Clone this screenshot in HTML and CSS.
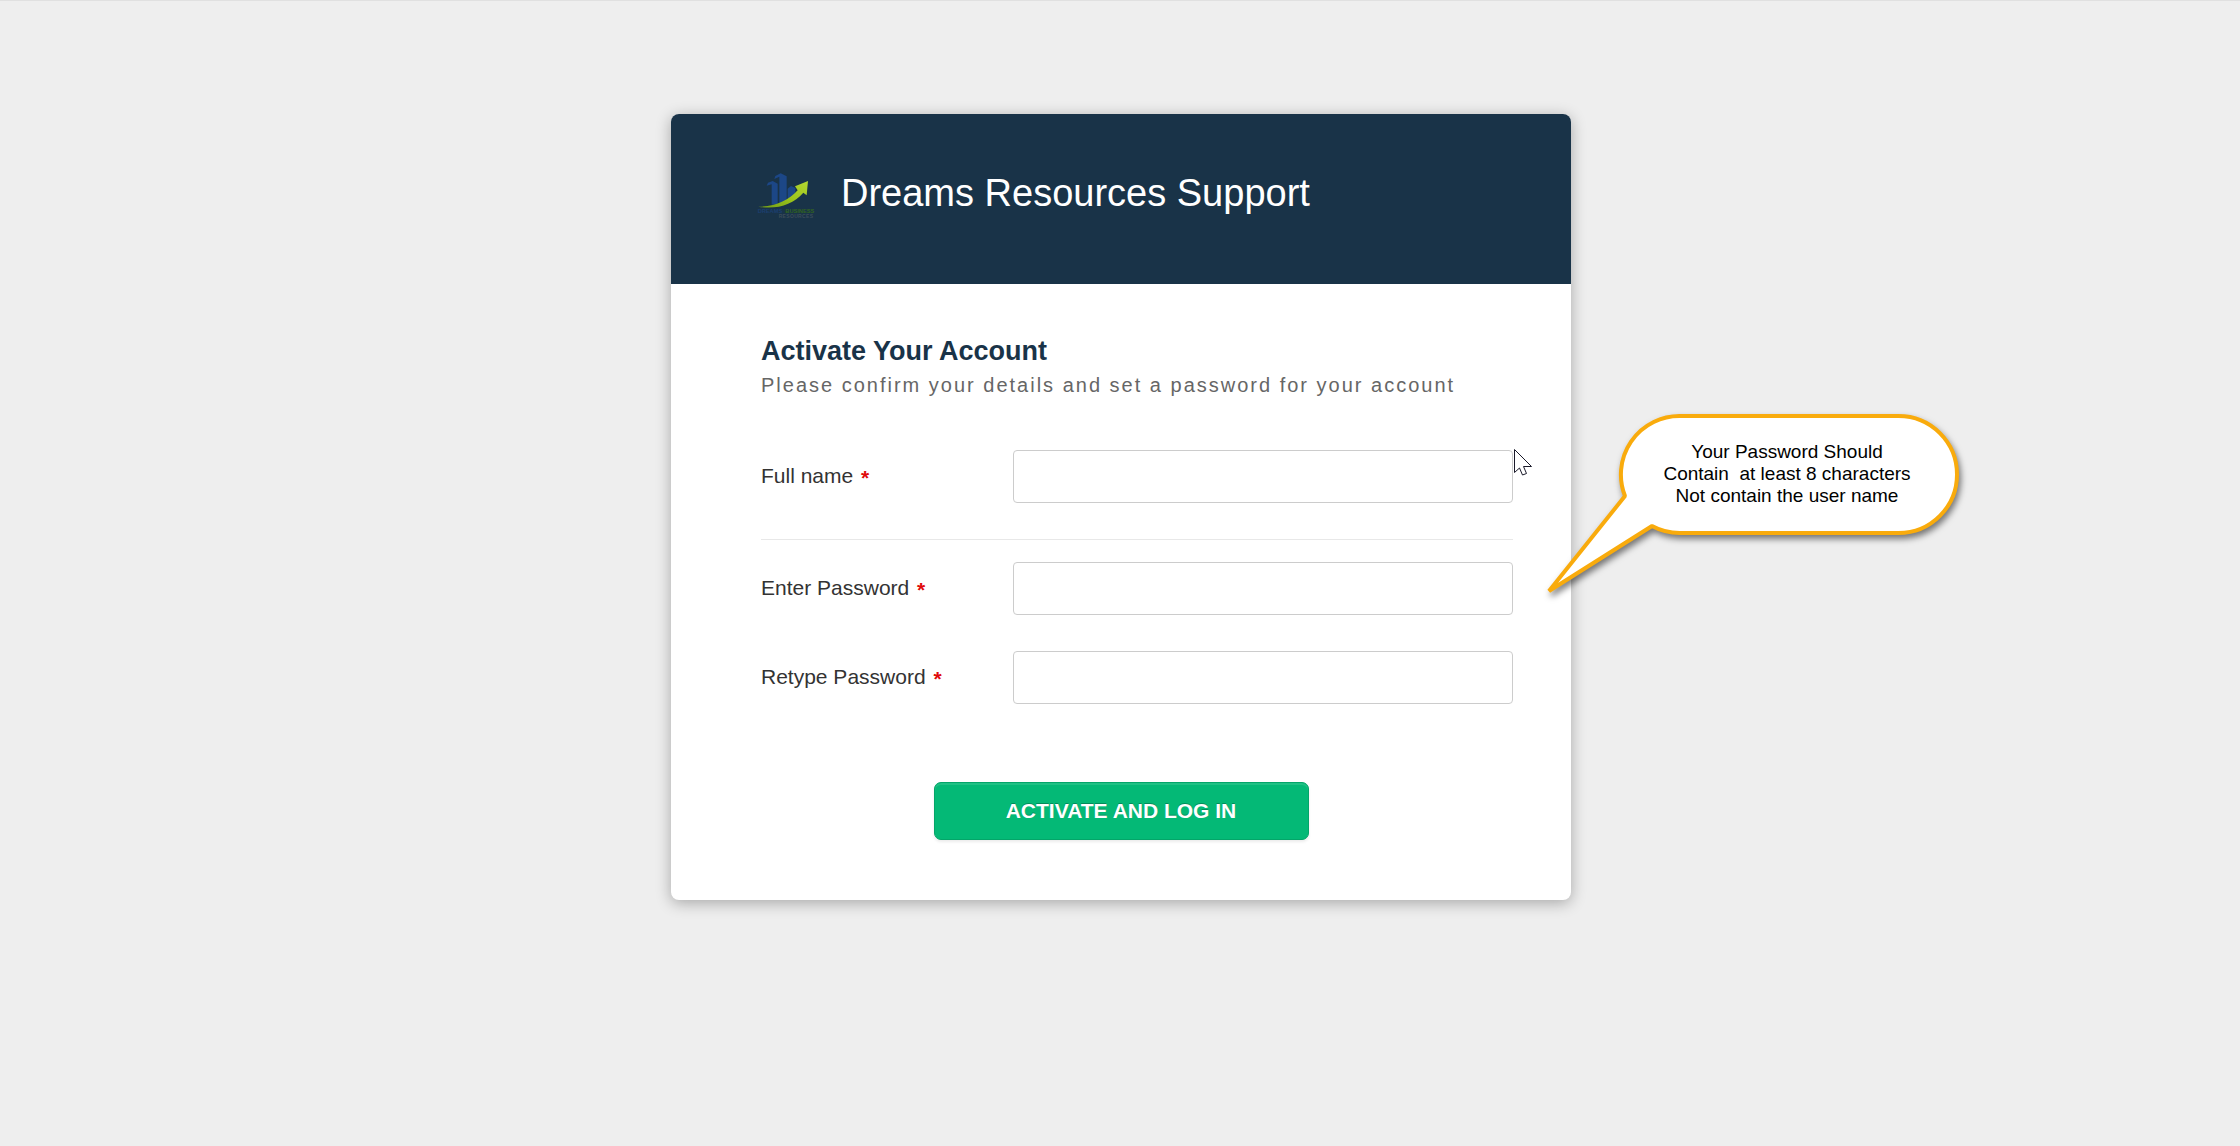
FILE: index.html
```
<!doctype html>
<html lang="en">
<head>
  <meta charset="UTF-8">
  <title>Dreams Resources Support</title>
  <link rel="stylesheet" href="styles.css">
</head>
<body>
  <div class="box">
    <div class="box-header">
      <svg class="logo" viewBox="51 60 180 150" role="img" aria-label="Dreams Business Resources">
        <defs>
          <linearGradient id="arrow" x1="0" y1="1" x2="1" y2="0">
            <stop offset="0" stop-color="#6f9c16"/>
            <stop offset="0.5" stop-color="#9cc41c"/>
            <stop offset="1" stop-color="#b4d832"/>
          </linearGradient>
        </defs>
        <g fill="#1c4787">
          <path d="M80 107 L84 98 L98 93 L113 101 V162 L95 164 V103 Z"/>
          <path d="M103 87 L106 78 L122 70 L140 79 V152 L118 161 V80 Z"/>
          <path d="M143 116 L153 108 L166 114 V130 L143 148 Z"/>
        </g>
        <path fill="url(#arrow)" d="M55 170 C105 170 147 151 173 121 L165 109 L204 93 L200 136 L190 128 C158 164 112 179 55 170 Z"/>
        <text class="logo-dreams" x="53" y="189">DREAMS</text>
        <text class="logo-business" x="136" y="189">BUSINESS</text>
        <text class="logo-resources" x="116" y="205">RESOURCES</text>
      </svg>
      <h1>Dreams Resources Support</h1>
    </div>
    <form>
      <div class="fields">
        <h2>Activate Your Account</h2>
        <p class="info">Please confirm your details and set a password for your account</p>
        <div class="row">
          <label for="name">Full name <span class="required">*</span></label>
          <input type="text" id="name" name="name">
        </div>
        <hr>
        <div class="row">
          <label for="password">Enter Password <span class="required">*</span></label>
          <input type="password" id="password" name="password">
        </div>
        <div class="row">
          <label for="retype">Retype Password <span class="required">*</span></label>
          <input type="password" id="retype" name="retype">
        </div>
      </div>
      <div class="actions">
        <button type="submit">ACTIVATE AND LOG IN</button>
      </div>
    </form>

    <div class="callout">
      <svg viewBox="0 0 440 210" aria-hidden="true">
        <path d="M85 90 A58.5 58.5 0 0 1 139.5 10 H358.5 A58.5 58.5 0 0 1 358.5 127 H139.5 A58.5 58.5 0 0 1 112 120 L9 185 Z"/>
      </svg>
      <p>Your Password Should<br>Contain&nbsp; at least 8 characters<br>Not contain the user name</p>
    </div>

    <svg class="cursor" viewBox="0 0 20 30" aria-hidden="true">
      <path d="M1.5 1.5 V24.5 L6.5 20 L9.5 27 L13.5 25.5 L10.5 18.5 H18.5 Z"/>
    </svg>
  </div>
</body>
</html>
```
FILE: styles.css
```
body, h1, h2, p {
  margin: 0;
  padding: 0;
}

body {
  padding-left: 2px;
  border-top: 1px solid #e0e0e0;
  background: #eee;
  font-family: Arial, "Liberation Sans", sans-serif;
  font-size: 21px;
  color: #333;
}

.box {
  position: relative;
  max-width: 900px;
  margin: 113px auto 60px;
  border-radius: 8px;
  background: #fff;
  box-shadow: 0 3px 15px rgba(0, 0, 0, 0.3);
}

.box-header {
  display: flex;
  align-items: flex-start;
  gap: 24px;
  padding: 56px 86px 64px;
  border-radius: 8px 8px 0 0;
  background: #193348;
}

.logo {
  width: 60px;
  height: 50px;
  flex: none;
}

.logo text {
  font-size: 17px;
  font-weight: bold;
}

.logo-dreams {
  fill: #1b3f70;
}

.logo-business {
  fill: #31641f;
}

.logo .logo-resources {
  fill: #3c4c59;
  font-size: 15px;
  letter-spacing: 1px;
}

h1 {
  font-size: 38px;
  font-weight: normal;
  line-height: 46px;
  color: #fff;
}

.fields {
  padding: 51px 58px 0 90px;
}

h2 {
  font-size: 27px;
  line-height: 32px;
  color: #193348;
}

.info {
  margin-bottom: 47px;
  font-size: 20px;
  line-height: 36px;
  letter-spacing: 2px;
  color: #666;
}

.row {
  display: grid;
  grid-template-columns: 252px 1fr;
  align-items: center;
}

.row + .row {
  margin-top: 36px;
}

.required {
  margin-left: 2px;
  font-weight: bold;
  vertical-align: -2px;
  color: #e00b0b;
}

input {
  box-sizing: border-box;
  width: 100%;
  height: 53px;
  padding: 0 12px;
  border: 1px solid #ccc;
  border-radius: 4px;
  background: #fff;
  font: inherit;
}

hr {
  margin: 36px 0 22px;
  border: 0;
  border-top: 1px solid #e8e8e8;
}

.actions {
  padding: 78px 0 60px;
  text-align: center;
}

button {
  display: block;
  width: 375px;
  height: 58px;
  margin: 0 auto;
  border: 1px solid #04a569;
  border-radius: 7px;
  background: #04b976;
  box-shadow: inset 0 2px 0 #1fc084, 0 2px 3px rgba(0, 0, 0, 0.08);
  font: inherit;
  font-weight: bold;
  color: #fff;
  text-shadow: 0 -1px 0 rgba(0, 0, 0, 0.25);
  cursor: pointer;
}

/* password hint pointing at the password field */
.callout {
  position: absolute;
  top: 292px;
  left: 869px;
  width: 440px;
}

.callout svg {
  display: block;
  overflow: visible;
  filter: drop-shadow(2px 4px 3px rgba(0, 0, 0, 0.5));
}

.callout path {
  fill: #fff;
  stroke: #f9ab0c;
  stroke-width: 4;
  stroke-linejoin: bevel;
}

.callout p {
  position: absolute;
  top: 35px;
  left: 80px;
  right: 26px;
  font-size: 19px;
  line-height: 22px;
  text-align: center;
  color: #000;
}

.cursor {
  position: absolute;
  top: 334px;
  left: 842px;
  width: 20px;
  height: 30px;
}

.cursor path {
  fill: #fff;
  stroke: #1a1a2a;
}
```
